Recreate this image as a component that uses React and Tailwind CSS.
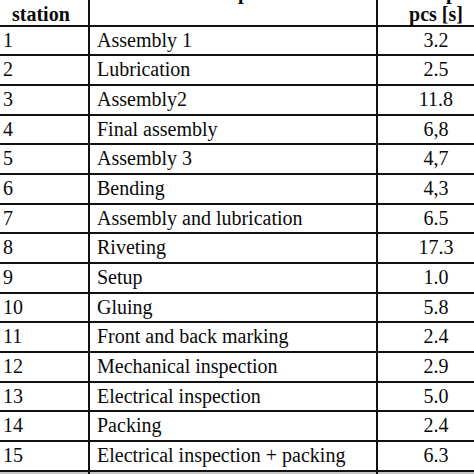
const rows = [
  ["1", "Assembly 1", "3.2"],
  ["2", "Lubrication", "2.5"],
  ["3", "Assembly2", "11.8"],
  ["4", "Final assembly", "6,8"],
  ["5", "Assembly 3", "4,7"],
  ["6", "Bending", "4,3"],
  ["7", "Assembly and lubrication", "6.5"],
  ["8", "Riveting", "17.3"],
  ["9", "Setup", "1.0"],
  ["10", "Gluing", "5.8"],
  ["11", "Front and back marking", "2.4"],
  ["12", "Mechanical inspection", "2.9"],
  ["13", "Electrical inspection", "5.0"],
  ["14", "Packing", "2.4"],
  ["15", "Electrical inspection + packing", "6.3"],
];

export default function App() {
  return (
    <div
      className="w-[474px] h-[474px] overflow-hidden bg-white text-[#0a0a0a]"
      style={{ fontFamily: '"Liberation Serif", "Times New Roman", serif' }}
    >
      <div className="w-[494px] -mt-[15.5px]">
        {/* header */}
        <div className="flex h-[42px] border-b-2 border-[#111] text-[20px] font-bold">
          <div className="w-[90px] shrink-0 border-r-2 border-[#111] pl-[12px]">
            <div className="leading-[15.5px]">&nbsp;</div>
            <div className="leading-[29.5px]">station</div>
          </div>
          <div className="w-[288px] shrink-0 border-r-2 border-[#111] text-center">
            <div className="leading-[15.5px]">Description</div>
          </div>
          <div className="flex-1 text-center">
            <div className="leading-[15.5px]">Time per</div>
            <div className="leading-[29.5px]">pcs [s]</div>
          </div>
        </div>

        {/* body */}
        {rows.map(([n, name, t]) => (
          <div key={n} className="flex h-[29.7px] border-b-2 border-[#111] text-[20px] leading-[27.7px]">
            <div className="w-[90px] shrink-0 border-r-2 border-[#111] pl-[3px]">{n}</div>
            <div className="w-[288px] shrink-0 border-r-2 border-[#111] pl-[7px] whitespace-nowrap">{name}</div>
            <div className="flex-1 text-center">{t}</div>
          </div>
        ))}

        {/* shaded total row, cut off */}
        <div className="flex h-[30px] bg-[#c6c6c6]">
          <div className="w-[90px] shrink-0 border-r-2 border-[#111]" />
          <div className="w-[288px] shrink-0 border-r-2 border-[#111]" />
          <div className="flex-1" />
        </div>
      </div>
    </div>
  );
}
